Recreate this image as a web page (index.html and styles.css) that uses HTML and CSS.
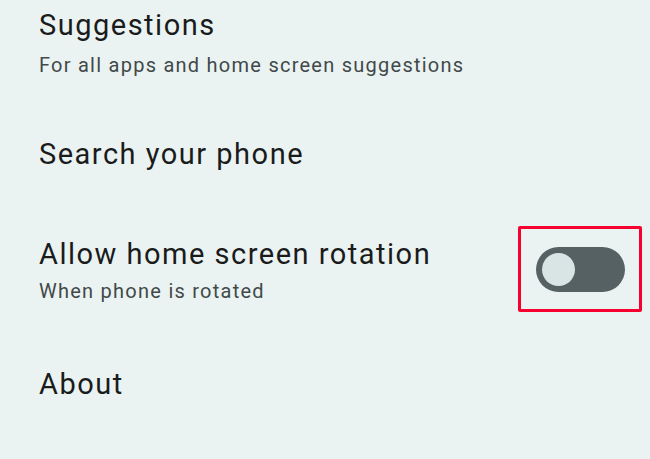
FILE: index.html
```html
<!DOCTYPE html>
<html lang="en">
<head>
<meta charset="utf-8">
<title>Home settings</title>
<link rel="stylesheet" href="styles.css">
</head>
<body>
<main class="settings">
  <div class="item item-first">
    <div class="item-text">
      <div class="title">Suggestions</div>
      <div class="summary">For all apps and home screen suggestions</div>
    </div>
  </div>
  <div class="item item-search">
    <div class="item-text">
      <div class="title">Search your phone</div>
    </div>
  </div>
  <div class="item item-rotation">
    <div class="item-text">
      <div class="title">Allow home screen rotation</div>
      <div class="summary summary-tight">When phone is rotated</div>
    </div>
    <div class="highlight">
      <div class="switch" role="switch" aria-checked="false">
        <span class="thumb"></span>
      </div>
    </div>
  </div>
  <div class="item item-about">
    <div class="item-text">
      <div class="title">About</div>
    </div>
  </div>
</main>
</body>
</html>
```
FILE: styles.css
```css
html, body {
  margin: 0;
  padding: 0;
  background: #ebf3f2;
}

body {
  width: 650px;
  height: 459px;
  overflow: hidden;
  font-family: Roboto, "Noto Sans", sans-serif;
  color: #1a1c1c;
}

.settings {
  display: flex;
  flex-direction: column;
}

.item {
  display: flex;
  align-items: flex-start;
  padding-left: 39px;
}

.item-text {
  flex: 1;
}

.title {
  font-size: 29px;
  line-height: 34px;
  letter-spacing: 1.5px;
}

.summary {
  font-size: 20px;
  line-height: 26px;
  letter-spacing: 1.25px;
  color: #414949;
  margin-top: 10px;
}

.summary-tight {
  margin-top: 7px;
}

.item-first {
  padding-top: 8px;
}

.item-search {
  margin-top: 59px;
}

.item-rotation {
  margin-top: 66px;
}

.item-about {
  margin-top: 55px;
}

/* red focus outline around the rotation switch */
.highlight {
  margin-right: 8px;
  margin-top: -11px;
  width: 118px;
  height: 80px;
  border: 3px solid #f5002f;
  border-radius: 2px;
  display: flex;
  align-items: center;
  justify-content: center;
}

.switch {
  width: 89px;
  height: 45px;
  border-radius: 23px;
  background: #566163;
  display: flex;
  align-items: center;
  padding-left: 6px;
  box-sizing: border-box;
}

.thumb {
  width: 33px;
  height: 33px;
  border-radius: 50%;
  background: #d9e4e4;
}
```
